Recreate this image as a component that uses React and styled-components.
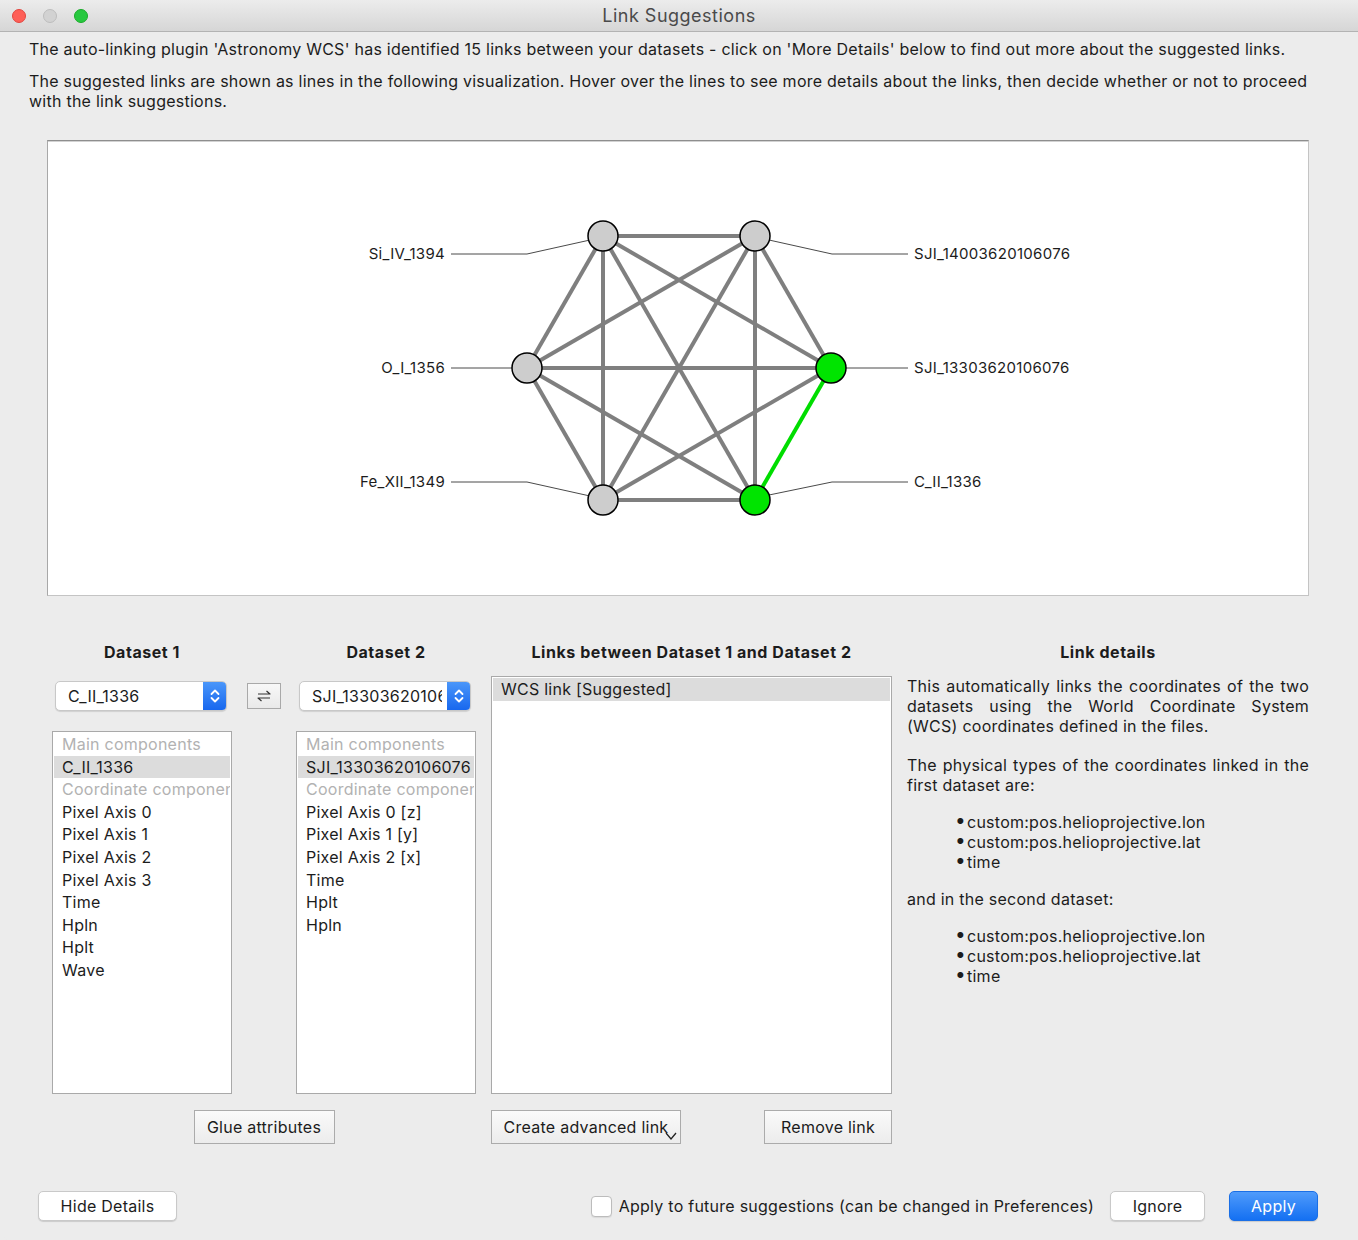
import React from 'react';
import styled, { createGlobalStyle } from 'styled-components';

const GlobalStyle = createGlobalStyle`
  html, body {
    margin: 0;
    padding: 0;
    background: #ececec;
    overflow: hidden;
  }
  * { box-sizing: border-box; }
`;

const FONT = `"Inter", "Liberation Sans", "DejaVu Sans", sans-serif`;

const Window = styled.div`
  width: 1358px;
  height: 1240px;
  display: flex;
  flex-direction: column;
  background: #ececec;
  font-family: ${FONT};
  font-size: 16px;
  letter-spacing: 0.25px;
  color: #1c1c1c;
  border-radius: 0 0 10px 10px;
  overflow: hidden;
`;

const TitleBar = styled.div`
  height: 32px;
  flex: none;
  display: flex;
  align-items: center;
  position: relative;
  background: linear-gradient(#ececec, #d6d6d6);
  border-bottom: 1px solid #b3b3b3;
`;

const Lights = styled.div`
  display: flex;
  gap: 17px;
  padding-left: 12px;
`;

const Light = styled.span`
  width: 14px;
  height: 14px;
  border-radius: 50%;
  background: ${p => p.$c};
  border: 1px solid ${p => p.$b};
`;

const Title = styled.div`
  position: absolute;
  left: 0;
  right: 0;
  text-align: center;
  font-size: 18px;
  letter-spacing: 0.5px;
  color: #4a4a4a;
  pointer-events: none;
`;

const Intro = styled.div`
  padding: 7px 29px 0 29px;
`;

const Para = styled.p`
  margin: 0 0 12px 0;
  line-height: 20px;
`;

const Canvas = styled.div`
  margin: 17px 49px 0 47px;
  height: 456px;
  background: #fff;
  border: 1px solid #c4c4c4;
  border-top: 1px solid #8e8e8e;
  border-left: 1px solid #a8a8a8;
  box-shadow: inset 0 1px 0 #d2d2d2;
  flex: none;
`;

const Lower = styled.div`
  margin: 46px 0 0 52px;
  display: grid;
  grid-template-columns: 180px 34px 180px 401px 402px;
  column-gap: 15px;
  align-items: start;
`;

const Column = styled.div`
  display: flex;
  flex-direction: column;
`;

const Heading = styled.div`
  height: 20px;
  line-height: 20px;
  font-weight: 700;
  letter-spacing: 0.55px;
  text-align: center;
  white-space: nowrap;
`;

const Combo = styled.div`
  margin: 19px 5px 0 3px;
  height: 30px;
  display: flex;
  align-items: center;
  background: #fff;
  border: 1px solid #c8c8c8;
  border-radius: 5px;
  box-shadow: 0 1px 1px rgba(0, 0, 0, 0.12);
  overflow: hidden;
`;

const ComboText = styled.span`
  flex: 1;
  margin: 0 5px 0 12px;
  white-space: nowrap;
  overflow: hidden;
`;

const Stepper = styled.span`
  width: 24px;
  height: 30px;
  margin: -1px -1px -1px 0;
  display: flex;
  align-items: center;
  justify-content: center;
  background: linear-gradient(#4c98fa, #1666ee);
  border-radius: 0 5px 5px 0;
  flex: none;
`;

const SwapButton = styled.div`
  margin-top: 21px;
  height: 26px;
  display: flex;
  align-items: center;
  justify-content: center;
  background: linear-gradient(#f8f8f8, #e9e9e9);
  border: 1px solid #a9a9a9;
`;

const ListBox = styled.div`
  margin-top: ${p => p.$top}px;
  height: ${p => p.$h}px;
  background: #fff;
  border: 1px solid #a9a9a9;
  padding: 1px;
  overflow: hidden;
`;

const Row = styled.div`
  height: 22.6px;
  line-height: 22.6px;
  padding-left: 8px;
  white-space: nowrap;
  overflow: hidden;
  color: ${p => (p.$muted ? '#b2b2b2' : '#1c1c1c')};
  background: ${p => (p.$sel ? '#dcdcdc' : 'transparent')};
`;

const Details = styled.div`
  margin-top: 14px;
  line-height: 20px;
  text-align: justify;
`;

const DetailPara = styled.p`
  margin: ${p => p.$top}px 0 0 0;
`;

const Bullets = styled.ul`
  list-style: none;
  margin: 17px 0 0 0;
  padding-left: 48px;
  text-align: left;
`;

const Bullet = styled.li`
  &::before {
    content: '•';
    display: inline-block;
    width: 12px;
    font-size: 19px;
    line-height: 18px;
    vertical-align: top;
  }
`;

const ButtonRow = styled.div`
  margin: 16px 0 0 52px;
  display: grid;
  grid-template-columns: 424px 401px;
  column-gap: 15px;
`;

const Centered = styled.div`
  display: flex;
  justify-content: center;
`;

const Split = styled.div`
  display: flex;
  justify-content: space-between;
`;

const QtButton = styled.div`
  position: relative;
  width: ${p => p.$w}px;
  height: 34px;
  display: flex;
  align-items: center;
  justify-content: center;
  white-space: nowrap;
  background: linear-gradient(#fafafa, #ececec);
  border: 1.5px solid #ababab;
`;

const MenuCaret = styled.svg`
  position: absolute;
  right: 3px;
  bottom: 3px;
`;

const Footer = styled.div`
  margin-top: auto;
  padding: 0 40px 19px 38px;
  display: flex;
  align-items: center;
`;

const MacButton = styled.div`
  width: ${p => p.$w}px;
  height: 30px;
  margin-left: ${p => p.$ml || 0}px;
  display: flex;
  align-items: center;
  justify-content: center;
  border-radius: 5px;
  background: ${p => (p.$primary ? 'linear-gradient(#4f9bfb, #1470f2)' : '#fff')};
  color: ${p => (p.$primary ? '#fff' : '#1c1c1c')};
  border: 1px solid ${p => (p.$primary ? '#1a6fe6' : '#c9c9c9')};
  box-shadow: 0 1px 1px rgba(0, 0, 0, 0.14);
`;

const Spacer = styled.div`
  flex: 1;
`;

const Check = styled.span`
  width: 21px;
  height: 21px;
  border-radius: 4px;
  background: #fff;
  border: 1px solid #bcbcbc;
  box-shadow: 0 1px 1px rgba(0, 0, 0, 0.08);
  margin-right: 7px;
`;

const nodes = [
  { x: 603, y: 236 },
  { x: 755, y: 236 },
  { x: 527, y: 368 },
  { x: 831, y: 368, on: true },
  { x: 603, y: 500 },
  { x: 755, y: 500, on: true },
];

const labels = [
  { text: 'Si_IV_1394', x: 445, y: 254, end: true, lead: '451,254 527,254 590,240' },
  { text: 'O_I_1356', x: 445, y: 368, end: true, lead: '451,368 512,368' },
  { text: 'Fe_XII_1349', x: 445, y: 482, end: true, lead: '451,482 527,482 590,496' },
  { text: 'SJI_14003620106076', x: 914, y: 254, lead: '908,254 832,254 769,240' },
  { text: 'SJI_13303620106076', x: 914, y: 368, lead: '846,368 908,368' },
  { text: 'C_II_1336', x: 914, y: 482, lead: '908,482 832,482 769,495' },
];

const LinkGraph = () => {
  const edges = [];
  for (let i = 0; i < nodes.length; i++) {
    for (let j = i + 1; j < nodes.length; j++) {
      edges.push([nodes[i], nodes[j], i === 3 && j === 5]);
    }
  }
  return (
    <svg width="1260" height="454" viewBox="48 141 1260 454" style={{ display: 'block' }}>
      {labels.map(l => (
        <polyline key={l.text + 'l'} points={l.lead} fill="none" stroke="#4a4a4a" strokeWidth="1" />
      ))}
      {edges.filter(e => !e[2]).map(([a, b], k) => (
        <line key={k} x1={a.x} y1={a.y} x2={b.x} y2={b.y} stroke="#7f7f7f" strokeWidth="4" />
      ))}
      {edges.filter(e => e[2]).map(([a, b], k) => (
        <line key={'g' + k} x1={a.x} y1={a.y} x2={b.x} y2={b.y} stroke="#00dd00" strokeWidth="4" />
      ))}
      {nodes.map((n, k) => (
        <circle key={k} cx={n.x} cy={n.y} r="15" fill={n.on ? '#00e400' : '#cdcdcd'} stroke="#000" strokeWidth="1.5" />
      ))}
      {labels.map(l => (
        <text
          key={l.text}
          x={l.x}
          y={l.y + 5}
          textAnchor={l.end ? 'end' : 'start'}
          fontSize="15"
          letterSpacing="0.3"
          fontFamily={FONT}
          fill="#1c1c1c"
        >
          {l.text}
        </text>
      ))}
    </svg>
  );
};

const StepIcon = () => (
  <svg width="12" height="18" viewBox="0 0 12 18">
    <path d="M2.5 7 L6 3.5 L9.5 7 M2.5 11 L6 14.5 L9.5 11" fill="none" stroke="#fff" strokeWidth="1.8" strokeLinecap="round" strokeLinejoin="round" />
  </svg>
);

const SwapIcon = () => (
  <svg width="16" height="12" viewBox="0 0 16 12">
    <path d="M2 4 H14 L10.5 1 M14 8 H2 L5.5 11" fill="none" stroke="#333" strokeWidth="1.2" strokeLinejoin="round" />
  </svg>
);

const LinkDetails = () => (
  <Details>
    <DetailPara $top={0}>
      This automatically links the coordinates of the two datasets using the World Coordinate System (WCS)&nbsp;coordinates defined in the files.
    </DetailPara>
    <DetailPara $top={19}>
      The physical types of the coordinates linked in the first dataset are:
    </DetailPara>
    <Bullets>
      <Bullet>custom:pos.helioprojective.lon</Bullet>
      <Bullet>custom:pos.helioprojective.lat</Bullet>
      <Bullet>time</Bullet>
    </Bullets>
    <DetailPara $top={17}>and in the second dataset:</DetailPara>
    <Bullets>
      <Bullet>custom:pos.helioprojective.lon</Bullet>
      <Bullet>custom:pos.helioprojective.lat</Bullet>
      <Bullet>time</Bullet>
    </Bullets>
  </Details>
);

const DatasetColumn = ({ title, value, main, items }) => (
  <Column>
    <Heading>{title}</Heading>
    <Combo>
      <ComboText>{value}</ComboText>
      <Stepper><StepIcon /></Stepper>
    </Combo>
    <ListBox $top={20} $h={363}>
      <Row $muted>Main components</Row>
      <Row $sel>{main}</Row>
      <Row $muted>Coordinate components</Row>
      {items.map(i => <Row key={i}>{i}</Row>)}
    </ListBox>
  </Column>
);

export default function App() {
  return (
    <>
      <GlobalStyle />
      <Window>
        <TitleBar>
          <Lights>
            <Light $c="#fe5f57" $b="#e2463f" />
            <Light $c="#d2d2d2" $b="#bdbdbd" />
            <Light $c="#27c83f" $b="#1aab29" />
          </Lights>
          <Title>Link Suggestions</Title>
        </TitleBar>

        <Intro>
          <Para>
            The auto-linking plugin 'Astronomy WCS' has identified 15 links between your datasets - click on 'More Details' below to find out more about the suggested links.
          </Para>
          <Para>
            The suggested links are shown as lines in the following visualization. Hover over the lines to see more details about the links, then decide whether or not to proceed
            <br />
            with the link suggestions.
          </Para>
        </Intro>

        <Canvas>
          <LinkGraph />
        </Canvas>

        <Lower>
          <DatasetColumn
            title="Dataset 1"
            value="C_II_1336"
            main="C_II_1336"
            items={['Pixel Axis 0', 'Pixel Axis 1', 'Pixel Axis 2', 'Pixel Axis 3', 'Time', 'Hpln', 'Hplt', 'Wave']}
          />
          <Column>
            <Heading />
            <SwapButton><SwapIcon /></SwapButton>
          </Column>
          <DatasetColumn
            title="Dataset 2"
            value="SJI_13303620106076"
            main="SJI_13303620106076"
            items={['Pixel Axis 0 [z]', 'Pixel Axis 1 [y]', 'Pixel Axis 2 [x]', 'Time', 'Hplt', 'Hpln']}
          />
          <Column>
            <Heading>Links between Dataset 1 and Dataset 2</Heading>
            <ListBox $top={14} $h={418}>
              <Row $sel>WCS link [Suggested]</Row>
            </ListBox>
          </Column>
          <Column>
            <Heading>Link details</Heading>
            <LinkDetails />
          </Column>
        </Lower>

        <ButtonRow>
          <Centered>
            <QtButton $w={141}>Glue attributes</QtButton>
          </Centered>
          <Split>
            <QtButton $w={190}>
              Create advanced link
              <MenuCaret width="12" height="8" viewBox="0 0 12 8">
                <path d="M1 1 L6 7 L11 1" fill="none" stroke="#222" strokeWidth="1.3" />
              </MenuCaret>
            </QtButton>
            <QtButton $w={128}>Remove link</QtButton>
          </Split>
        </ButtonRow>

        <Footer>
          <MacButton $w={139}>Hide Details</MacButton>
          <Spacer />
          <Check />
          <span>Apply to future suggestions (can be changed in Preferences)</span>
          <MacButton $w={95} $ml={16}>Ignore</MacButton>
          <MacButton $w={89} $ml={24} $primary>Apply</MacButton>
        </Footer>
      </Window>
    </>
  );
}
